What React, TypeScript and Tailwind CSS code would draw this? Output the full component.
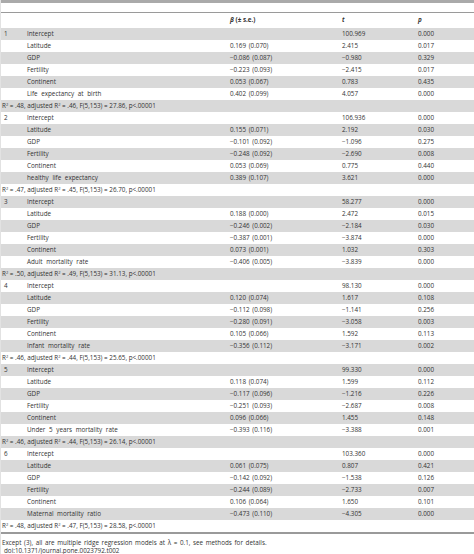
import React from "react";

type Row = [string, string, string, string];
type Model = { n: string; rows: Row[]; r: [string, string, string, string] };

const models: Model[] = [
  {
    n: "1",
    rows: [
      ["Intercept", "", "100.969", "0.000"],
      ["Latitude", "0.169 (0.070)", "2.415", "0.017"],
      ["GDP", "−0.086 (0.087)", "−0.980", "0.329"],
      ["Fertility", "−0.223 (0.093)", "−2.415", "0.017"],
      ["Continent", "0.053 (0.067)", "0.783", "0.435"],
      ["Life expectancy at birth", "0.402 (0.099)", "4.057", "0.000"],
    ],
    r: [".48", ".46", "27.86", ""],
  },
  {
    n: "2",
    rows: [
      ["Intercept", "", "106.936", "0.000"],
      ["Latitude", "0.155 (0.071)", "2.192", "0.030"],
      ["GDP", "−0.101 (0.092)", "−1.096", "0.275"],
      ["Fertility", "−0.248 (0.092)", "−2.690", "0.008"],
      ["Continent", "0.053 (0.069)", "0.775", "0.440"],
      ["healthy life expectancy", "0.389 (0.107)", "3.621", "0.000"],
    ],
    r: [".47", ".45", "26.70", ""],
  },
  {
    n: "3",
    rows: [
      ["Intercept", "", "58.277", "0.000"],
      ["Latitude", "0.188 (0.000)", "2.472", "0.015"],
      ["GDP", "−0.246 (0.002)", "−2.184", "0.030"],
      ["Fertility", "−0.387 (0.001)", "−3.874", "0.000"],
      ["Continent", "0.073 (0.001)", "1.032", "0.303"],
      ["Adult mortality rate", "−0.406 (0.005)", "−3.839", "0.000"],
    ],
    r: [".50", ".49", "31.13", ""],
  },
  {
    n: "4",
    rows: [
      ["Intercept", "", "98.130", "0.000"],
      ["Latitude", "0.120 (0.074)", "1.617", "0.108"],
      ["GDP", "−0.112 (0.098)", "−1.141", "0.256"],
      ["Fertility", "−0.280 (0.091)", "−3.058", "0.003"],
      ["Continent", "0.105 (0.066)", "1.592", "0.113"],
      ["Infant mortality rate", "−0.356 (0.112)", "−3.171", "0.002"],
    ],
    r: [".46", ".44", "25.65", ""],
  },
  {
    n: "5",
    rows: [
      ["Intercept", "", "99.330", "0.000"],
      ["Latitude", "0.118 (0.074)", "1.599", "0.112"],
      ["GDP", "−0.117 (0.096)", "−1.216", "0.226"],
      ["Fertility", "−0.251 (0.093)", "−2.687", "0.008"],
      ["Continent", "0.096 (0.066)", "1.455", "0.148"],
      ["Under 5 years mortality rate", "−0.393 (0.116)", "−3.388", "0.001"],
    ],
    r: [".46", ".44", "26.14", ""],
  },
  {
    n: "6",
    rows: [
      ["Intercept", "", "103.360", "0.000"],
      ["Latitude", "0.061 (0.075)", "0.807", "0.421"],
      ["GDP", "−0.142 (0.092)", "−1.538", "0.126"],
      ["Fertility", "−0.244 (0.089)", "−2.733", "0.007"],
      ["Continent", "0.106 (0.064)", "1.650", "0.101"],
      ["Maternal mortality ratio", "−0.473 (0.110)", "−4.305", "0.000"],
    ],
    r: [".48", ".47", "28.58", ""],
  },
];

const grid = "grid grid-cols-[26px_203px_112px_76px_1fr] items-center h-[12px]";

export default function App() {
  let idx = 0;
  const bg = () => (idx++ % 2 === 0 ? "bg-[#d9d9d9]" : "bg-white");
  return (
    <div
      className="w-[474px] h-[554px] bg-white text-[#333] text-[6.3px] leading-none border-l border-[#e2e2e2] overflow-hidden"
      style={{ fontFamily: '"Open Sans", "DejaVu Sans", sans-serif' }}
    >
      <div className="h-[3px] bg-[#aaaaaa]" />
      <div className="h-[9px]" />
      <div className="h-px bg-[#9a9a9a]" />
      <div className="grid grid-cols-[26px_203px_112px_76px_1fr] h-[15px] pt-[4px] font-bold">
        <div />
        <div />
        <div>
          <span className="italic">β</span> (± s.e.)
        </div>
        <div className="italic">t</div>
        <div className="italic">p</div>
      </div>
      {models.map((m) => (
        <React.Fragment key={m.n}>
          {m.rows.map((r, i) => (
            <div key={i} className={`${grid} ${bg()}`}>
              <div className="pl-[3px]">{i === 0 ? m.n : ""}</div>
              <div className="[word-spacing:2px]">{r[0]}</div>
              <div className="[word-spacing:1px]">{r[1]}</div>
              <div>{r[2]}</div>
              <div>{r[3]}</div>
            </div>
          ))}
          <div className={`flex items-center h-[12px] pl-[1px] ${bg()}`}>
            R<sup className="text-[4px] relative -top-[1px]">2</sup>&nbsp;= {m.r[0]}, adjusted R
            <sup className="text-[4px] relative -top-[1px]">2</sup>&nbsp;= {m.r[1]}, F(5,153) = {m.r[2]}, p&lt;.00001
          </div>
        </React.Fragment>
      ))}
      <div className="h-[2px] bg-[#9a9a9a]" />
      <div className="pt-[5px] pl-[1px] text-[6.3px] leading-[8px] flex flex-col [word-spacing:1px]">
        <div>Except (3), all are multiple ridge regression models at λ = 0.1, see methods for details.</div>
        <div className="pl-[2px]">doi:10.1371/journal.pone.0023792.t002</div>
      </div>
    </div>
  );
}
